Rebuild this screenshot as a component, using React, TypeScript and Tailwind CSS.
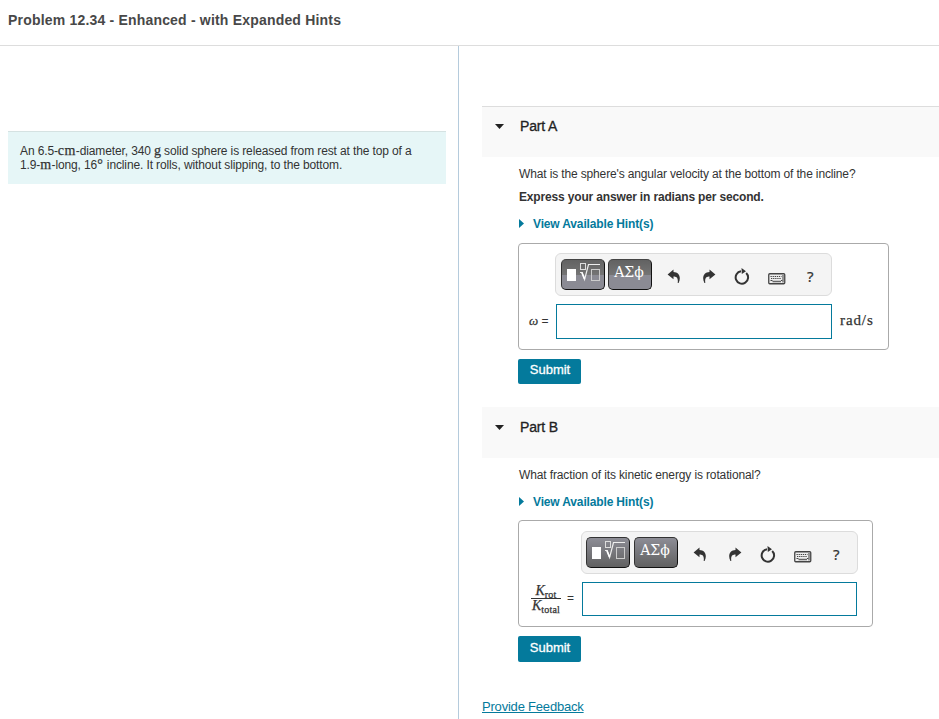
import type { ReactNode } from 'react';
import clsx from 'clsx';

function UndoIcon({ flip = false }: { flip?: boolean }) {
  return (
    <svg className={clsx('h-[15px] w-[14px]', flip && '-scale-x-100')} viewBox="0 0 14 15" fill="#333">
      <path d="M6.5 0.6 0.6 5.4l5.9 4.8V7.5c2.6 0 5 .8 4.2 6.5h.9C14.5 8 12 3.2 6.5 3z" />
    </svg>
  );
}

function ResetIcon() {
  return (
    <svg className="h-[17px] w-[16px]" viewBox="0 0 16 17" fill="none">
      <path d="M12.2 5A6.2 6.2 0 1 1 7 3.3" stroke="#333" strokeWidth="2" />
      <path d="M7.5 0 12 3.3 7.8 6z" fill="#333" />
    </svg>
  );
}

function KeyboardIcon() {
  return (
    <svg className="h-[12px] w-[18px]" viewBox="0 0 18 12" fill="none">
      <rect x="0.75" y="0.75" width="16" height="10" rx="1" fill="#eee" stroke="#444" strokeWidth="1.3" />
      <path d="M2.5 3.5h11M3 5.5h10.5" stroke="#444" strokeDasharray="1.3 0.8" />
      <path d="M2.5 7.5h2M13 7.5h1.5" stroke="#444" />
      <path d="M4.5 8.5h8.5M15 2v7.5" stroke="#666" strokeWidth="1.3" />
    </svg>
  );
}

function TemplateIcon() {
  return (
    <svg className="h-[23px] w-[35px]" viewBox="1 0 35 23" fill="none">
      <rect x="2" y="9" width="9" height="12" fill="#fff" />
      <rect x="15.5" y="3.5" width="5" height="6" stroke="#ddd" />
      <path d="M15 12.5h2.2l2.4 7L23.5 4.5H35" stroke="#eee" strokeWidth="1.2" />
      <path d="M16.8 12.5 19.5 19" stroke="#fff" strokeWidth="1.6" />
      <rect x="26.5" y="9.5" width="8" height="11" stroke="#ccc" />
    </svg>
  );
}

function Toolbar({ split = false }: { split?: boolean }) {
  const button = clsx(
    'flex h-[31px] w-[44px] justify-center rounded-[5px] border border-[#111]',
    split
      ? 'border-t-[#444] border-l-[#333] bg-linear-to-b from-[#626262] from-0% via-[#747474] via-50% to-[#8b8b94] to-52%'
      : 'border-t-[#333] border-l-[#333] bg-linear-to-b from-[#8d8d96] to-[#616161]',
  );

  return (
    <div className={clsx('flex h-[43px] w-[277px] items-start rounded-[6px] border border-[#dcdcdc] bg-[#f4f4f4] pt-[5px]', split ? 'pl-[5px]' : 'pl-[4px]')}>
      <button className={button}>
        <TemplateIcon />
      </button>
      <button className={clsx(button, split ? 'ml-[3px]' : 'ml-[4px]')}>
        <span className="pt-[4px] pr-[2px] font-['DejaVu_Serif',serif] text-[14px] leading-[17px] text-white">ΑΣϕ</span>
      </button>
      <div className="mt-[10px] ml-[15px]"><UndoIcon /></div>
      <div className="mt-[10px] ml-[21px]"><UndoIcon flip /></div>
      <div className="mt-[9px] ml-[18px]"><ResetIcon /></div>
      <div className="mt-[14px] ml-[18px]"><KeyboardIcon /></div>
      <span className="mt-[9px] ml-[21px] font-['Noto_Sans',sans-serif] text-[15px] leading-[17px] text-[#333] [-webkit-text-stroke:0.2px_#333]">?</span>
    </div>
  );
}

function PartHeader({ title, className }: { title: string; className?: string }) {
  return (
    <div className={clsx('flex h-[51px] items-start bg-[#f9f9f9] pl-[13px]', className)}>
      <svg className="mt-[17px] h-[5px] w-[9px]" viewBox="0 0 9 5" fill="#222">
        <path d="M0 0h9L4.5 5z" />
      </svg>
      <h2 className="ml-[16px] pt-[11px] text-[14px] leading-[16px] tracking-[-0.15px] text-[#222] [-webkit-text-stroke:0.3px_#222]">{title}</h2>
    </div>
  );
}

function Hints() {
  return (
    <a className="flex h-[14px] items-center text-[12px] leading-[14px] font-bold tracking-[-0.15px] text-[#047a9c]">
      <svg className="mr-[9px] mb-px h-[9px] w-[5px]" viewBox="0 0 5 9" fill="#047a9c">
        <path d="M0 0 5 4.5 0 9z" />
      </svg>
      View Available Hint(s)
    </a>
  );
}

function Submit({ className }: { className?: string }) {
  return (
    <button className={clsx('block w-[63px] rounded-[2px] bg-[#047a9c] pl-px text-[13px] leading-[16px] text-white [-webkit-text-stroke:0.3px_white]', className)}>
      Submit
    </button>
  );
}

function MathText({ children, className }: { children: ReactNode; className?: string }) {
  return <span className={clsx("font-['Liberation_Serif',serif] [-webkit-text-stroke:0.25px_currentColor]", className)}>{children}</span>;
}

export default function App() {
  return (
    <div className="flex h-[719px] w-[939px] flex-col overflow-hidden bg-white font-['Liberation_Sans',Arial,sans-serif] text-[#333]">
      <header className="h-[46px] shrink-0 border-b border-[#ddd] pt-[12px] pl-[8px]">
        <h1 className="text-[14px] leading-[16px] font-bold tracking-[0.19px] text-[#484848]">
          Problem 12.34 - Enhanced - with Expanded Hints
        </h1>
      </header>

      <div className="flex flex-1">
        {/* Problem statement */}
        <aside className="w-[459px] border-r border-[#b5cbdc] pt-[85px] pl-[8px]">
          <div className="h-[53px] w-[438px] border-t border-[#d5e2e2] bg-[#e6f6f7] pt-[12px] pl-[12px] text-[12px] leading-[14px] tracking-[-0.12px] whitespace-nowrap">
            <p className="h-[14px]">
              An 6.5-<MathText className="text-[14px] leading-none tracking-[0.4px]">cm</MathText>-diameter, 340{' '}
              <MathText className="text-[14px] leading-none">g</MathText> solid sphere is released from rest at the top of a
            </p>
            <p className="h-[14px]">
              1.9-<MathText className="text-[14px] leading-none tracking-[0.4px]">m</MathText>-long, 16
              <MathText className="text-[14px] leading-none tracking-[0.9px]">°</MathText> incline. It rolls, without slipping, to the bottom.
            </p>
          </div>
        </aside>

        <main className="flex-1 pt-[60px] pl-[23px]">
          {/* Part A */}
          <PartHeader title="Part A" className="border-t border-[#ddd]" />
          <section className="h-[250px] pt-[10px] pl-[36px]">
            <p className="pl-px text-[12px] leading-[14px] tracking-[-0.14px]">What is the sphere's angular velocity at the bottom of the incline?</p>
            <p className="mt-[9px] pl-px text-[12px] leading-[14px] font-bold tracking-[-0.16px]">Express your answer in radians per second.</p>
            <div className="mt-[13px] pl-px"><Hints /></div>
            <div className="mt-[12px] h-[107px] w-[371px] rounded-[4px] border border-[#aaa] pt-[9px]">
              <div className="pl-[36px]"><Toolbar split /></div>
              <div className="mt-[8px] flex h-[35px] items-center">
                <span className="w-[37px] pb-px pl-[10px] text-[12px] whitespace-nowrap">
                  <MathText className="text-[13px] italic">ω</MathText> =
                </span>
                <input className="h-[35px] w-[276px] border border-[#047a9c] bg-white outline-none" />
                <MathText className="ml-[8px] pb-[2px] text-[15px] tracking-[0.9px]">rad/s</MathText>
              </div>
            </div>
            <Submit className="mt-[9px] h-[25px] pb-[4px]" />
          </section>

          {/* Part B */}
          <PartHeader title="Part B" className="pt-px" />
          <section className="h-[241px] pt-[10px] pl-[36px]">
            <p className="pl-px text-[12px] leading-[14px] tracking-[-0.13px]">What fraction of its kinetic energy is rotational?</p>
            <div className="mt-[13px] pl-px"><Hints /></div>
            <div className="mt-[11px] h-[107px] w-[355px] rounded-[4px] border border-[#aaa] pt-[10px]">
              <div className="pl-[62px]"><Toolbar /></div>
              <div className="mt-[8px] flex h-[34px] items-center">
                <div className="ml-[12px] flex w-[30px] flex-col pb-px text-center leading-[13px]">
                  <MathText className="h-[15px] border-b border-[#333] text-[14px]">
                    <i>K</i><sub className="text-[10px] tracking-[0.2px]">rot</sub>
                  </MathText>
                  <MathText className="h-[14px] text-[14px]">
                    <i>K</i><sub className="text-[10px] tracking-[0.2px]">total</sub>
                  </MathText>
                </div>
                <span className="w-[21px] pb-[3px] pl-[6px] text-[12px]">=</span>
                <input className="h-[34px] w-[275px] border border-[#047a9c] bg-white outline-none" />
              </div>
            </div>
            <Submit className="mt-[9px] h-[26px] pb-[3px]" />
          </section>

          <a className="block text-[13px] leading-[15px] tracking-[-0.2px] text-[#047a9c] underline">Provide Feedback</a>
        </main>
      </div>
    </div>
  );
}
